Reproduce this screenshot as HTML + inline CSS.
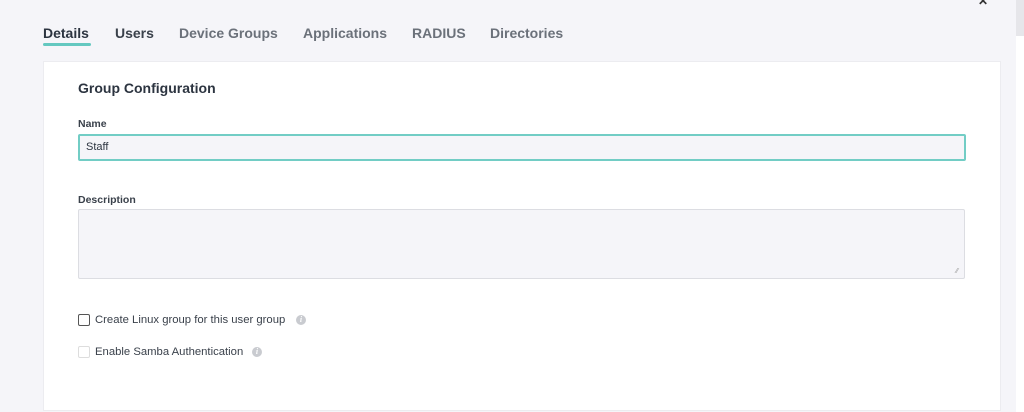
<!DOCTYPE html>
<html><head><style>
body{margin:0;width:1024px;height:412px;background:#f5f5f9;font-family:"Liberation Sans",sans-serif;position:relative;overflow:hidden;color:#2c3440}
.tab{position:absolute;top:25px;font-size:14px;font-weight:bold;color:#6b717a}
.card{position:absolute;left:43px;top:61px;width:956px;height:348px;background:#fff;border:1px solid #ececf0}
.lbl{position:absolute;left:78px;font-size:10.5px;font-weight:bold;color:#3a414b}
.chk{position:absolute;left:78px;width:10px;height:10px;border:1px solid #555;border-radius:2px;background:#fff}
.ct{position:absolute;left:95px;font-size:11.3px;color:#3a414b}
.info{position:absolute;width:10px;height:10px;border-radius:50%;background:#c9cbd0;color:#fff;font-size:8px;text-align:center;line-height:10px;font-style:italic;font-weight:bold;font-family:"Liberation Serif",serif}
</style></head><body>
<div style="position:absolute;left:1016px;top:0;width:8px;height:36px;background:#e6e6ea"></div>
<div style="position:absolute;left:1016px;top:36px;width:8px;height:376px;background:#fff"></div>
<div style="position:absolute;left:978px;top:-6px;font-size:12px;color:#333;font-weight:bold">✕</div>
<div class="tab" style="left:43px;color:#2c3440">Details</div>
<div style="position:absolute;left:43px;top:43px;width:48px;height:3px;background:#64c8c0;border-radius:2px"></div>
<div class="tab" style="left:115px;color:#3a414b">Users</div>
<div class="tab" style="left:179px">Device Groups</div>
<div class="tab" style="left:303px">Applications</div>
<div class="tab" style="left:412px">RADIUS</div>
<div class="tab" style="left:490px">Directories</div>
<div class="card"></div>
<div style="position:absolute;left:78px;top:80px;font-size:14px;font-weight:bold;color:#2c3440">Group Configuration</div>
<div class="lbl" style="top:118px">Name</div>
<div style="position:absolute;left:78px;top:134px;width:884px;height:23px;border:2px solid #72cdc5;background:#f5f5f9;border-radius:2px"></div>
<div style="position:absolute;left:86px;top:141px;font-size:11px;color:#2c3440">Staff</div>
<div class="lbl" style="top:194px">Description</div>
<div style="position:absolute;left:78px;top:209px;width:885px;height:68px;border:1px solid #dcdde2;background:#f5f5f9;border-radius:2px"></div>
<div style="position:absolute;left:956px;top:268px;font-size:7px;color:#999">⁄⁄</div>
<div class="chk" style="top:314px"></div>
<div class="ct" style="top:314px">Create Linux group for this user group</div>
<div class="info" style="left:296px;top:315px">i</div>
<div class="chk" style="top:346px;border-color:#ddd"></div>
<div class="ct" style="top:346px">Enable Samba Authentication</div>
<div class="info" style="left:252px;top:347px">i</div>
</body></html>
